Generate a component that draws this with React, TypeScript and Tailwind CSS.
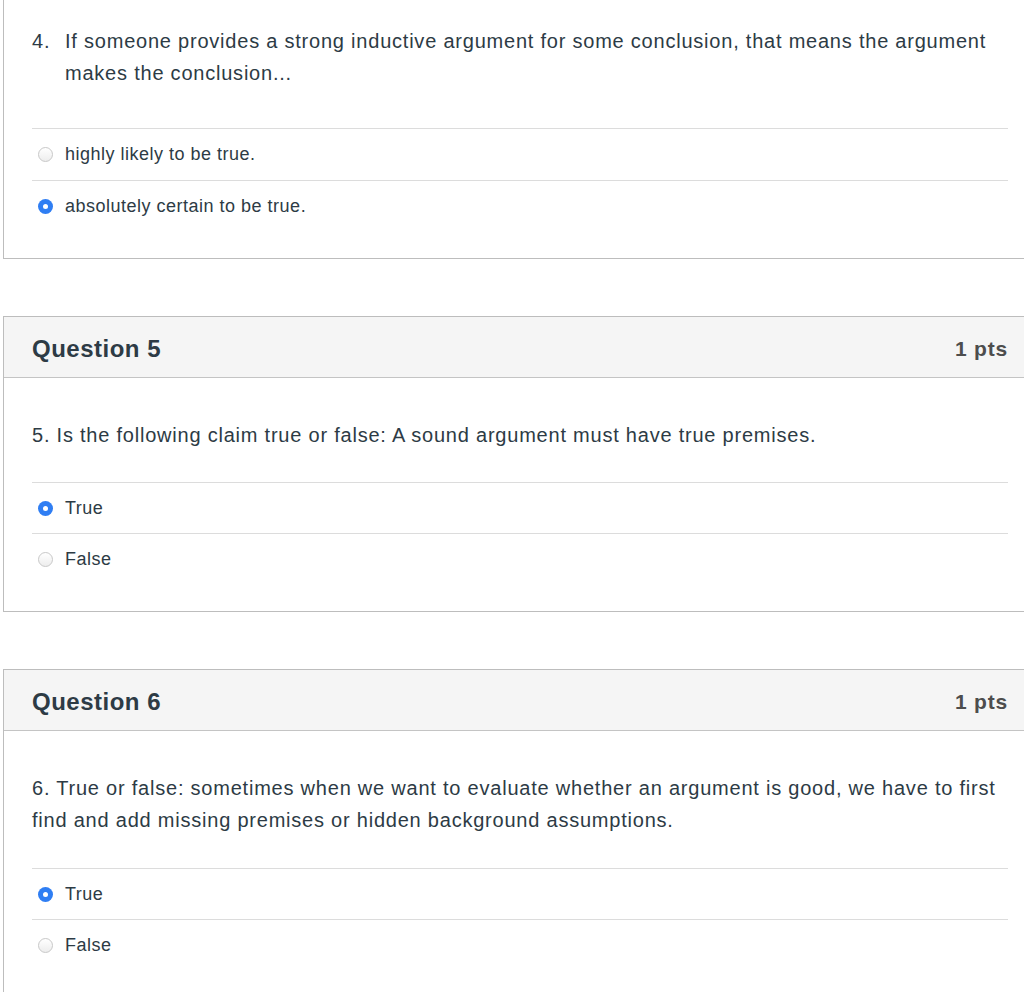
const font = { fontFamily: '"Liberation Sans", Arial, sans-serif' }

function Radio({ checked }: { checked?: boolean }) {
  if (checked) {
    return (
      <span className="flex h-[15px] w-[15px] items-center justify-center rounded-full bg-[#2f7ef3]">
        <span className="h-[5px] w-[5px] rounded-full bg-white" />
      </span>
    )
  }
  return (
    <span className="h-[15px] w-[15px] rounded-full border border-[#c8c8c8] bg-gradient-to-b from-white to-[#ededed]" />
  )
}

function Answers({ items, row }: { items: { label: string; checked?: boolean }[]; row: string }) {
  return (
    <div>
      {items.map((a) => (
        <div key={a.label} className={`flex items-center border-t border-[#dcdcdc] pl-[6px] ${row}`}>
          <Radio checked={a.checked} />
          <span className="ml-[12px] text-[18px] tracking-[0.5px] text-[#2d3b45]">{a.label}</span>
        </div>
      ))}
    </div>
  )
}

function Header({ n }: { n: number }) {
  return (
    <div className="flex h-[61px] items-center justify-between border-b border-[#c4c4c4] bg-[#f5f5f5] px-[28px] pt-[3px]">
      <span className="text-[24px] font-bold tracking-[0.5px] text-[#2d3b45]">Question {n}</span>
      <span className="text-[21px] font-bold tracking-[0.8px] text-[#4d4d4d]">1 pts</span>
    </div>
  )
}

const q = 'text-[20px] leading-[32px] tracking-[0.78px] text-[#2d3b45]'

export default function App() {
  return (
    <div className="h-[992px] w-[1024px] overflow-hidden bg-white" style={font}>
      {/* Question 4 (top cut off) */}
      <div className="ml-[3px] w-[1034px] border-x border-b border-[#bdbdbd]">
        <div className="px-[28px] pb-[26px]">
          <div className={`flex pt-[25px] pb-[39px] ${q}`}>
            <span className="w-[33px] shrink-0">4.</span>
            <p>
              If someone provides a strong inductive argument for some conclusion, that means the argument makes the
              conclusion...
            </p>
          </div>
          <Answers
            row="h-[52px]"
            items={[
              { label: 'highly likely to be true.' },
              { label: 'absolutely certain to be true.', checked: true },
            ]}
          />
        </div>
      </div>

      {/* Question 5 */}
      <div className="mt-[57px] ml-[3px] w-[1034px] border border-[#bdbdbd]">
        <Header n={5} />
        <div className="px-[28px] pb-[27px]">
          <p className={`pt-[41px] pb-[31px] ${q}`}>
            5. Is the following claim true or false: A sound argument must have true premises.
          </p>
          <Answers row="h-[51px]" items={[{ label: 'True', checked: true }, { label: 'False' }]} />
        </div>
      </div>

      {/* Question 6 */}
      <div className="mt-[57px] ml-[3px] w-[1034px] border border-[#bdbdbd]">
        <Header n={6} />
        <div className="px-[28px] pb-[27px]">
          <p className={`pt-[41px] pb-[32px] ${q}`}>
            6. True or false: sometimes when we want to evaluate whether an argument is good, we have to first find
            and add missing premises or hidden background assumptions.
          </p>
          <Answers row="h-[51px]" items={[{ label: 'True', checked: true }, { label: 'False' }]} />
        </div>
      </div>
    </div>
  )
}
